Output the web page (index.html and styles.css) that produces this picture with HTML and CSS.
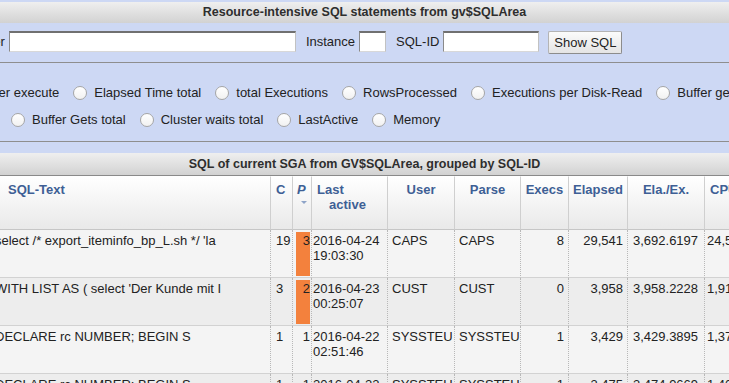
FILE: index.html
```html
<!DOCTYPE html>
<html lang="en">
<head>
<meta charset="utf-8">
<title>SQL Area</title>
<link rel="stylesheet" href="styles.css">
</head>
<body>
<div class="page">
  <div class="bar bar-top">Resource-intensive SQL statements from gv$SQLArea</div>

  <div class="panel form-panel">
    <label class="lbl lbl-filter">Filter</label><input class="inp inp-filter" type="text">
    <label class="lbl">Instance</label><input class="inp inp-inst" type="text">
    <label class="lbl">SQL-ID</label><input class="inp inp-sqlid" type="text">
    <button class="btn" type="button">Show SQL</button>
  </div>

  <div class="panel radio-panel">
    <div class="radio-row row-first">
      <label class="opt"><input class="rad" type="radio" name="order">Elapsed Time per execute</label>
      <label class="opt"><input class="rad" type="radio" name="order">Elapsed Time total</label>
      <label class="opt"><input class="rad" type="radio" name="order">total Executions</label>
      <label class="opt"><input class="rad" type="radio" name="order">RowsProcessed</label>
      <label class="opt"><input class="rad" type="radio" name="order">Executions per Disk-Read</label>
      <label class="opt"><input class="rad" type="radio" name="order">Buffer gets per Row</label>
    </div>
    <div class="radio-row row-second">
      <label class="opt"><input class="rad" type="radio" name="order">Buffer Gets total</label>
      <label class="opt"><input class="rad" type="radio" name="order">Cluster waits total</label>
      <label class="opt"><input class="rad" type="radio" name="order">LastActive</label>
      <label class="opt"><input class="rad" type="radio" name="order">Memory</label>
    </div>
  </div>

  <div class="bar bar-table">SQL of current SGA from GV$SQLArea, grouped by SQL-ID</div>

  <table class="sqltab">
    <colgroup>
      <col class="c-text"><col class="c-c"><col class="c-p"><col class="c-last"><col class="c-user"><col class="c-parse"><col class="c-execs"><col class="c-ela"><col class="c-elaex"><col class="c-cpu">
    </colgroup>
    <thead>
      <tr>
        <th class="th-text">SQL-Text</th>
        <th class="th-left">C</th>
        <th class="th-p"><i>P</i><span class="sort"></span></th>
        <th class="th-left th-last">Last<br><span class="ind">active</span></th>
        <th>User</th>
        <th>Parse</th>
        <th>Execs</th>
        <th>Elapsed</th>
        <th>Ela./Ex.</th>
        <th class="th-left">CPU</th>
      </tr>
    </thead>
    <tbody>
      <tr class="odd">
        <td class="td-text">select /* export_iteminfo_bp_L.sh */ 'la</td>
        <td>19</td>
        <td class="td-p bar-p">3</td>
        <td class="td-last">2016-04-24 19:03:30</td>
        <td class="td-name">CAPS</td>
        <td class="td-name">CAPS</td>
        <td class="num">8</td>
        <td class="num">29,541</td>
        <td class="num td-elaex">3,692.6197</td>
        <td class="td-cpu">24,507</td>
      </tr>
      <tr class="even">
        <td class="td-text">WITH LIST AS ( select 'Der Kunde mit I</td>
        <td>3</td>
        <td class="td-p bar-p">2</td>
        <td class="td-last">2016-04-23 00:25:07</td>
        <td class="td-name">CUST</td>
        <td class="td-name">CUST</td>
        <td class="num">0</td>
        <td class="num">3,958</td>
        <td class="num td-elaex">3,958.2228</td>
        <td class="td-cpu">1,914</td>
      </tr>
      <tr class="odd">
        <td class="td-text">DECLARE rc NUMBER; BEGIN S</td>
        <td>1</td>
        <td class="td-p">1</td>
        <td class="td-last">2016-04-22 02:51:46</td>
        <td class="td-name">SYSSTEU</td>
        <td class="td-name">SYSSTEU</td>
        <td class="num">1</td>
        <td class="num">3,429</td>
        <td class="num td-elaex">3,429.3895</td>
        <td class="td-cpu">1,371</td>
      </tr>
      <tr class="even">
        <td class="td-text">DECLARE rc NUMBER; BEGIN S</td>
        <td>1</td>
        <td class="td-p">1</td>
        <td class="td-last">2016-04-22 03:12:09</td>
        <td class="td-name">SYSSTEU</td>
        <td class="td-name">SYSSTEU</td>
        <td class="num">1</td>
        <td class="num">3,475</td>
        <td class="num td-elaex">3,474.9669</td>
        <td class="td-cpu">1,402</td>
      </tr>
    </tbody>
  </table>
</div>
</body>
</html>
```

FILE: styles.css
```css
* { box-sizing: border-box; }

html, body {
  margin: 0;
  padding: 0;
}

body {
  width: 729px;
  height: 383px;
  overflow: hidden;
  background: #ffffff;
  font-family: "Liberation Sans", Arial, Helvetica, sans-serif;
  font-size: 13px;
  color: #222222;
}

.page {
  background: #cdd8f4;
  padding-top: 2px;
  width: 729px;
}

/* title bars */
.bar {
  height: 21px;
  line-height: 21px;
  text-align: center;
  font-size: 12.5px;
  font-weight: bold;
  color: #2e2e2e;
  background: linear-gradient(#efefef, #d2d2d2);
  white-space: nowrap;
}

.bar-table {
  margin-top: 11px;
  height: 23px;
  line-height: 23px;
  border-bottom: 1px solid #8a8a8a;
}

/* form panel */
.panel {
  white-space: nowrap;
  border-bottom: 1px solid #8e8e8e;
}

.form-panel {
  display: flex;
  align-items: flex-start;
  height: 40px;
  padding-top: 8px;
}

.lbl {
  line-height: 21px;
  margin-right: 4px;
}

.lbl-filter {
  margin-left: -24px;
}

.inp {
  height: 21px;
  padding: 0 3px;
  margin: 0 10px 0 0;
  background: #ffffff;
  border-style: solid;
  border-width: 2px 1px 1px 1px;
  border-color: #707070 #c2c2c2 #d8d8d8 #8a8a8a;
  font: inherit;
}

.inp-filter { width: 287px; }
.inp-inst { width: 27px; }
.inp-sqlid { width: 96px; margin-right: 9px; }

.btn {
  width: 74px;
  height: 23px;
  padding: 0;
  font: inherit;
  color: #222222;
  background: linear-gradient(#fbfbfb, #e4e4e4);
  border: 1px solid #b4b4b4;
  border-right-color: #8c8c8c;
  border-bottom-color: #8c8c8c;
  border-radius: 2px;
}

/* radio panel */
.radio-panel {
  height: 79px;
  padding-top: 16px;
}

.radio-row {
  display: flex;
  align-items: center;
  height: 27px;
}

.row-first { margin-left: -112px; }
.row-second { margin-left: 11px; }

.opt {
  display: flex;
  align-items: center;
  margin-right: 14px;
}

.rad {
  -webkit-appearance: none;
  appearance: none;
  width: 14px;
  height: 14px;
  margin: 0 7px 0 0;
  border: 1px solid #a6a6a6;
  border-radius: 50%;
  background: linear-gradient(#ffffff, #f1f1f1);
  flex: none;
}

/* table */
.sqltab {
  margin-left: -10px;
  border-collapse: separate;
  border-spacing: 0;
  table-layout: fixed;
  width: 775px;
  background: #ffffff;
}

.c-text { width: 281px; }
.c-c { width: 22px; }
.c-p { width: 19px; }
.c-last { width: 76px; }
.c-user { width: 67px; }
.c-parse { width: 66px; }
.c-execs { width: 48px; }
.c-ela { width: 59px; }
.c-elaex { width: 77px; }
.c-cpu { width: 60px; }

.sqltab th {
  height: 54px;
  padding: 5px 2px 0;
  vertical-align: top;
  text-align: center;
  line-height: 15px;
  font-weight: bold;
  color: #3e5f95;
  background: linear-gradient(#ffffff, #e9e9e9);
  border-top: 1px solid #ffffff;
  border-right: 1px solid #cfcfcf;
  border-bottom: 1px solid #c6c6c6;
  white-space: nowrap;
}

.sqltab th.th-left { text-align: left; padding-left: 5px; }
.sqltab th.th-text { text-align: left; padding-left: 18px; }
.sqltab th.th-last { padding-left: 5px; }
.sqltab th.th-p { text-align: left; padding-left: 4px; }

.th-p i { display: block; }

.sort {
  display: block;
  width: 0;
  height: 0;
  margin: 4px 0 0 4px;
  border-left: 3px solid transparent;
  border-right: 3px solid transparent;
  border-top: 3px solid #8ea4c8;
}

.ind { padding-left: 12px; }

.sqltab td {
  height: 48px;
  padding: 3px 5px 0;
  vertical-align: top;
  line-height: 15px;
  color: #222222;
  border-right: 1px dotted #b8b8b8;
  border-bottom: 1px solid #d2d2d2;
  white-space: nowrap;
  overflow: hidden;
}

.sqltab tr.odd td { background-color: #f4f4f4; }
.sqltab tr.even td { background-color: #ededed; }

.sqltab td.num { text-align: right; padding-right: 4px; }
.sqltab td.td-elaex { padding-right: 6px; }
.sqltab td.td-text { padding-left: 5px; }
.sqltab td.td-name { padding-left: 4px; padding-right: 1px; }
.sqltab td.td-last { white-space: normal; padding-left: 1px; padding-right: 2px; }
.sqltab td.td-p { text-align: right; padding-right: 1px; }
.sqltab td.td-cpu { padding-left: 2px; }

.sqltab tr td.bar-p {
  background-image: linear-gradient(#f3813d, #f3813d);
  background-repeat: no-repeat;
  background-size: 14px calc(100% - 3px);
  background-position: 3px 2px;
}
```
